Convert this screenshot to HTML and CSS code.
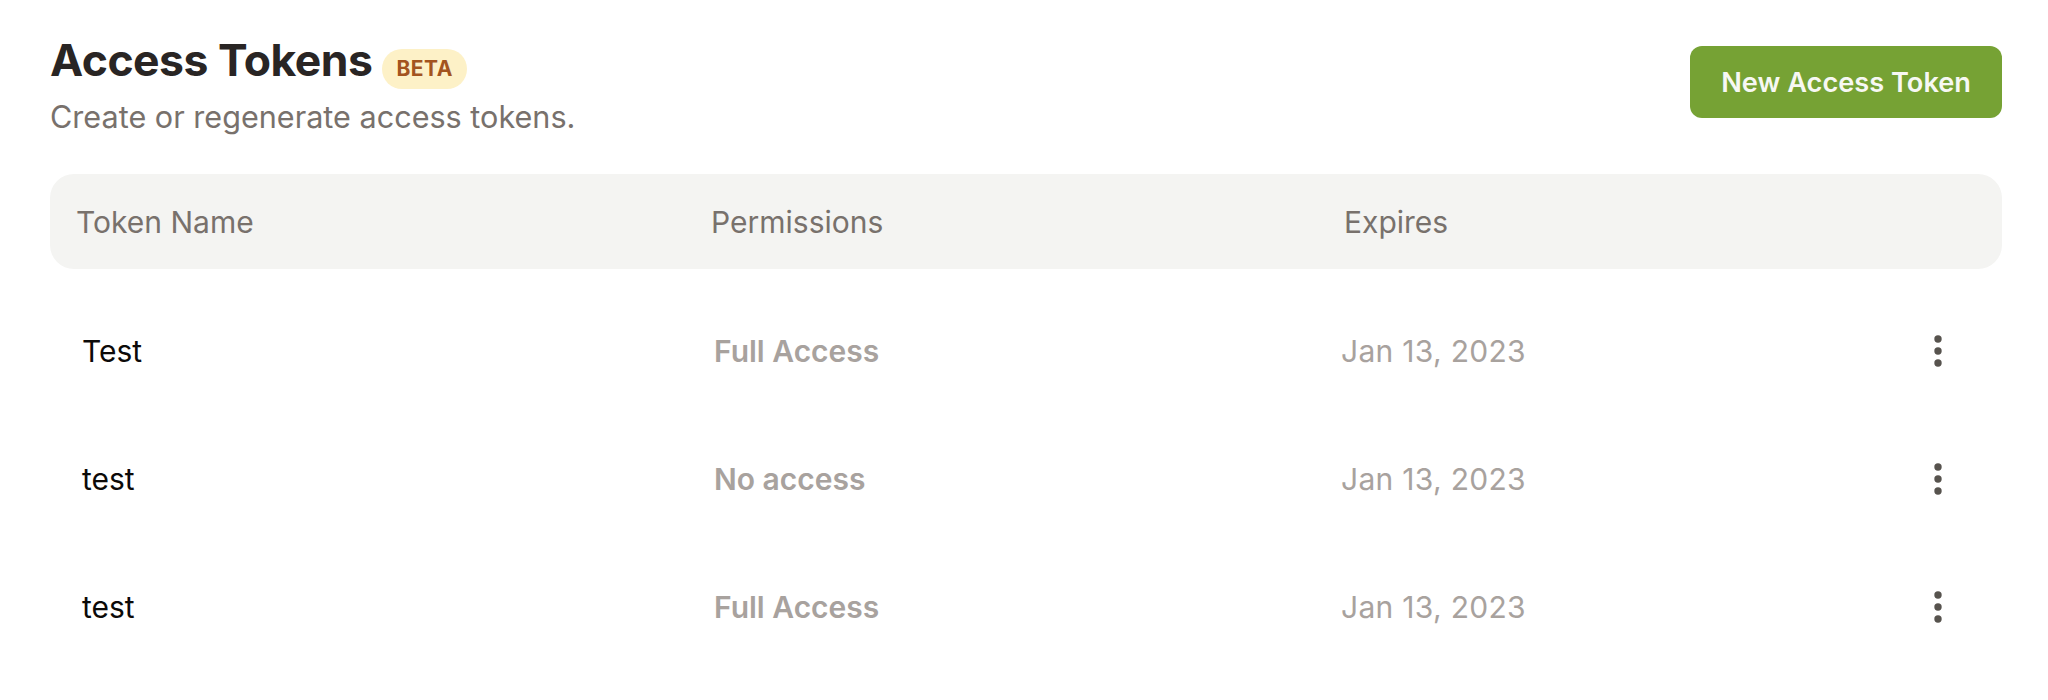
FILE: index.html
```html
<!DOCTYPE html>
<html lang="en">
<head>
<meta charset="utf-8">
<title>Access Tokens</title>
<link rel="stylesheet" href="styles.css">
</head>
<body>
<main class="page">
  <header class="page-header">
    <div class="heading">
      <h1 class="title">Access Tokens <span class="badge">BETA</span></h1>
      <p class="subtitle">Create or regenerate access tokens.</p>
    </div>
    <button class="btn-primary" type="button">New Access Token</button>
  </header>

  <section class="tokens">
    <div class="tokens-head">
      <div class="th">Token Name</div>
      <div class="th">Permissions</div>
      <div class="th">Expires</div>
    </div>

    <div class="token-row">
      <div class="cell-name">Test</div>
      <div class="cell-perm">Full Access</div>
      <div class="cell-date">Jan 13, 2023</div>
      <button class="kebab" type="button" aria-label="More">
        <svg width="8" height="32" viewBox="0 0 8 32"><circle cx="4" cy="4" r="3.7"/><circle cx="4" cy="16" r="3.7"/><circle cx="4" cy="28" r="3.7"/></svg>
      </button>
    </div>
    <div class="token-row">
      <div class="cell-name">test</div>
      <div class="cell-perm">No access</div>
      <div class="cell-date">Jan 13, 2023</div>
      <button class="kebab" type="button" aria-label="More">
        <svg width="8" height="32" viewBox="0 0 8 32"><circle cx="4" cy="4" r="3.7"/><circle cx="4" cy="16" r="3.7"/><circle cx="4" cy="28" r="3.7"/></svg>
      </button>
    </div>
    <div class="token-row">
      <div class="cell-name">test</div>
      <div class="cell-perm">Full Access</div>
      <div class="cell-date">Jan 13, 2023</div>
      <button class="kebab" type="button" aria-label="More">
        <svg width="8" height="32" viewBox="0 0 8 32"><circle cx="4" cy="4" r="3.7"/><circle cx="4" cy="16" r="3.7"/><circle cx="4" cy="28" r="3.7"/></svg>
      </button>
    </div>
  </section>
</main>
</body>
</html>
```

FILE: styles.css
```css
* { box-sizing: border-box; }

html, body {
  margin: 0;
  padding: 0;
  background: #ffffff;
}

body {
  font-family: Inter, "Noto Sans", sans-serif;
  color: #1c1917;
}

.page {
  padding: 30px 46px 0 50px;
}

.page-header {
  display: flex;
  justify-content: space-between;
  align-items: flex-start;
}

.title {
  margin: 0;
  font-size: 44.5px;
  line-height: 60px;
  font-weight: 700;
  color: #292524;
  letter-spacing: -0.5px;
  display: flex;
  align-items: baseline;
  gap: 10px;
}

.badge {
  display: inline-block;
  background: #fdf1c7;
  color: #a3541f;
  font-size: 21px;
  font-weight: 700;
  line-height: 40px;
  height: 40px;
  padding: 0 14px;
  border-radius: 20px;
  letter-spacing: 0.5px;
}

.subtitle {
  margin: 7px 0 0;
  font-size: 30.6px;
  line-height: 40px;
  color: #78716c;
}

.btn-primary {
  font-family: inherit;
  height: 72px;
  margin-top: 16px;
  padding: 0 31px;
  border: none;
  border-radius: 12px;
  background: #76a234;
  color: #f7f8f3;
  font-size: 27.2px;
  font-weight: 600;
}

.tokens {
  margin-top: 37px;
}

.tokens-head {
  display: grid;
  grid-template-columns: 635px 633px 1fr;
  align-items: center;
  height: 95px;
  padding: 0 26px;
  background: #f4f4f2;
  border-radius: 24px;
}

.th {
  font-size: 30px;
  line-height: 40px;
  color: #78716c;
}

.tokens-head + .token-row {
  margin-top: 18px;
}

.token-row {
  display: grid;
  grid-template-columns: 632px 627px 1fr auto;
  align-items: center;
  height: 128px;
  padding: 0 60px 0 32px;
  font-size: 30px;
  line-height: 40px;
}

.cell-name {
  color: #0c0a09;
}

.cell-perm {
  color: #a8a29e;
  font-weight: 600;
}

.cell-date {
  color: #a8a29e;
  letter-spacing: 0.3px;
}

.kebab {
  display: flex;
  padding: 0;
  border: none;
  background: none;
  fill: #57534e;
}
```
